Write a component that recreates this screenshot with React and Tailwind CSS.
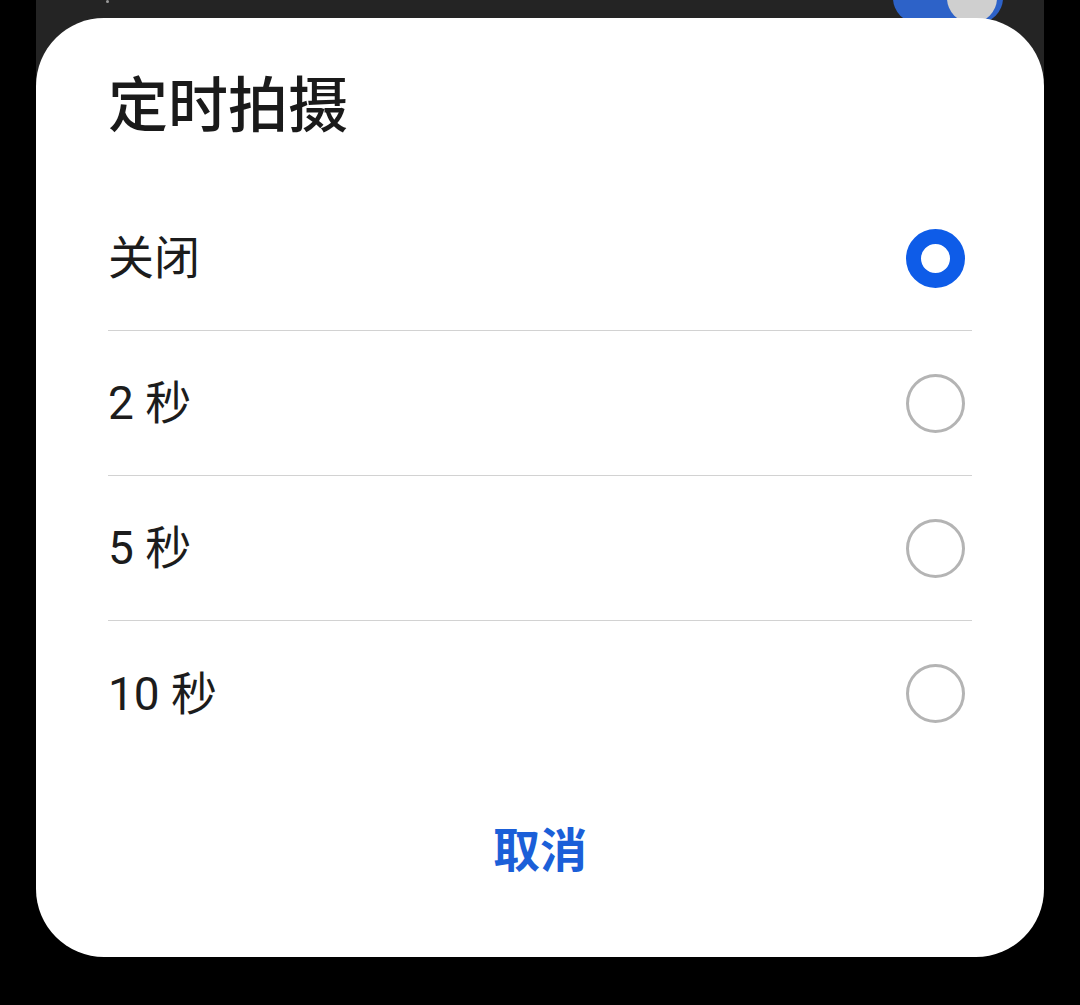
const options = [
  { label: '关闭', selected: true },
  { label: '2 秒' },
  { label: '5 秒' },
  { label: '10 秒' },
]

function Radio({ selected }) {
  if (selected) {
    return <div className="mr-[7px] h-[59px] w-[59px] rounded-full border-[15px] border-[#0e5ce8] bg-white" />
  }
  return <div className="mr-[7px] h-[59px] w-[59px] rounded-full border-[3px] border-[#b4b4b4] bg-white" />
}

export default function App() {
  return (
    <div
      className="relative h-[1005px] w-[1080px] overflow-hidden bg-black"
      style={{ fontFamily: 'Roboto, "Noto Sans CJK SC", sans-serif' }}
    >
      {/* dimmed settings page behind the sheet */}
      <div className="absolute left-[36px] top-0 h-[260px] w-[1008px] bg-[#242424]">
        <div className="absolute left-[70px] top-0 h-[3px] w-[3px] rounded-full bg-[#9a9a9a]" />
        <div className="absolute right-[41px] top-[-27px] flex h-[50px] w-[110px] items-center justify-end rounded-full bg-[#2d62c8] pr-[6px]">
          <div className="h-[50px] w-[50px] rounded-full bg-[#cfcfcf]" />
        </div>
      </div>

      {/* dialog */}
      <div className="relative mx-[36px] mt-[18px] flex h-[939px] flex-col rounded-[68px] bg-white px-[72px] pt-[47px]">
        <h1 className="mb-[37px] text-[60px] font-medium leading-[84px] text-[#1a1a1a]">定时拍摄</h1>

        <div className="flex flex-col">
          {options.map((o, i) => (
            <div
              key={o.label}
              className={
                'flex h-[145px] items-center justify-between ' +
                (i < options.length - 1 ? 'border-b border-[#d2d2d2]' : '')
              }
            >
              <span className="text-[46px] leading-[60px] text-[#1c1c1c]">{o.label}</span>
              <Radio selected={o.selected} />
            </div>
          ))}
        </div>

        <div className="mt-[53px] flex justify-center">
          <button className="text-[47px] font-bold leading-[64px] text-[#1b5fd8]">取消</button>
        </div>
      </div>
    </div>
  )
}
